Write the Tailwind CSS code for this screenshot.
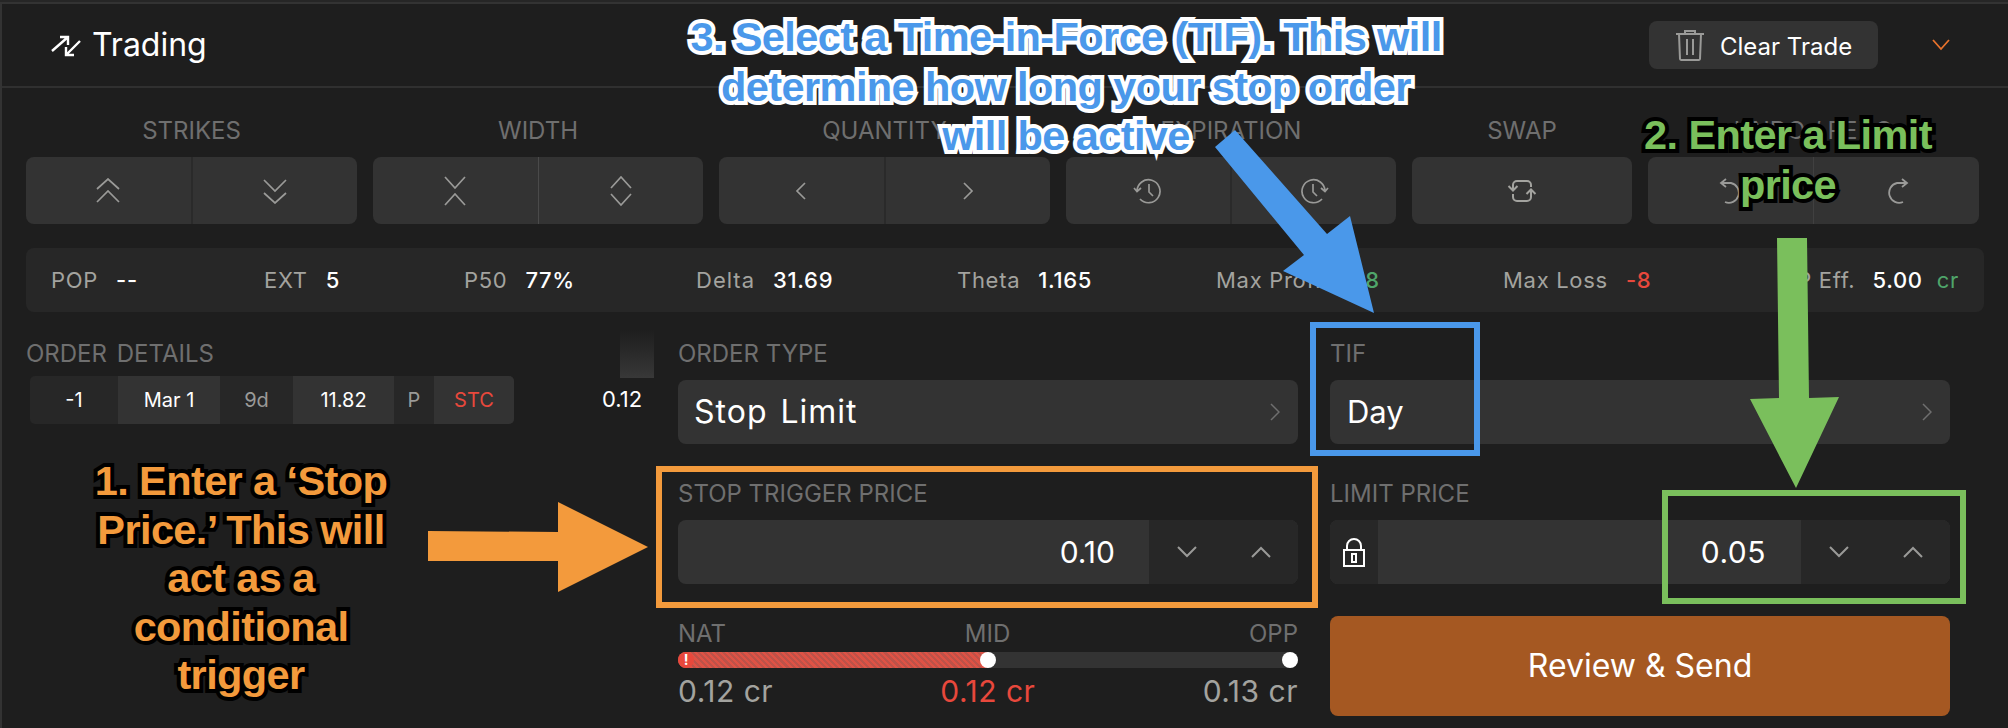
<!doctype html>
<html><head><meta charset="utf-8"><script src="https://cdn.jsdelivr.net/npm/@tailwindcss/browser@4"></script></head>
<body class="bg-[#1e1e1e] m-0">
<div class="relative w-[2008px] h-[728px] overflow-hidden bg-[#262626] pt-[2px] font-['Inter',sans-serif] text-white">
 <div class="h-[726px] border-t-2 border-l-2 border-[#333333] bg-[#1e1e1e]">
  <header class="h-[84px] border-b-2 border-[#303030] flex items-center pl-[48px] pr-[58px]">
    <svg class="w-[32px] h-[24px] mr-[10px]" viewBox="0 0 32 24" fill="none" stroke="#fff" stroke-width="2.400"><path d="M2 18 18 4M10 4h8v8M30 8 16 22M16 14v8h8"/></svg>
    <span class="text-[32px]">Trading</span>
    <button class="ml-auto w-[229px] h-[48px] rounded-[8px] bg-[#333333] flex items-center pl-[26px] text-[24px]">
      <svg class="w-[30px] h-[32px] mr-[15px]" viewBox="0 0 30 32" fill="none" stroke="#9a9a98" stroke-width="2"><path d="M1 5h28M10 5V2h10v3M4 5l1 25a1.500 1.500 0 0 0 1.500 1h17a1.500 1.500 0 0 0 1.500-1l1-25M12 10v16M18 10v16"/></svg>
      <span class="pt-[3px]">Clear Trade</span></button>
    <svg class="w-[18px] h-[12px] ml-[54px]" viewBox="0 0 18 12" fill="none" stroke="#e8722c" stroke-width="1.800"><path d="M1 1l8 9 8-9"/></svg>
  </header>
  <div class="px-[24px]">
   <div class="flex gap-[16px] pt-[29px]">
    <div class="w-[331px]"><p class="text-center text-[24px] text-[#6f6f6f] leading-[28px] mb-[12px]">STRIKES</p>
     <div class="flex h-[67px] rounded-[8px] bg-[#333333] overflow-hidden"><div class="flex-1 flex items-center justify-center border-r-2 border-[#2a2a2a]"><svg class="w-[26px] h-[26px]" viewBox="0 0 26 26" fill="none" stroke="#9a9a98" stroke-width="1.700"><path d="M2 11 13 1l11 10M2 24l11-11 11 11"/></svg></div><div class="flex-1 flex items-center justify-center"><svg class="w-[26px] h-[26px]" viewBox="0 0 26 26" fill="none" stroke="#9a9a98" stroke-width="1.700"><path d="M2 2l11 11L24 2M2 15l11 10 11-10"/></svg></div></div></div>
    <div class="w-[330px]"><p class="text-center text-[24px] text-[#6f6f6f] leading-[28px] mb-[12px]">WIDTH</p>
     <div class="flex h-[67px] rounded-[8px] bg-[#333333] overflow-hidden"><div class="flex-1 flex items-center justify-center border-r border-[#4a4a4a]"><svg class="w-[24px] h-[32px]" viewBox="0 0 24 32" fill="none" stroke="#9a9a98" stroke-width="1.700"><path d="M2 2l10 11L22 2M2 30l10-11 10 11"/></svg></div><div class="flex-1 flex items-center justify-center"><svg class="w-[24px] h-[32px]" viewBox="0 0 24 32" fill="none" stroke="#9a9a98" stroke-width="1.700"><path d="M2 13 12 2l10 11M2 19l10 11 10-11"/></svg></div></div></div>
    <div class="w-[331px]"><p class="text-center text-[24px] text-[#6f6f6f] leading-[28px] mb-[12px]">QUANTITY</p>
     <div class="flex h-[67px] rounded-[8px] bg-[#333333] overflow-hidden"><div class="flex-1 flex items-center justify-center border-r-2 border-[#2a2a2a]"><svg class="w-[12px] h-[20px]" viewBox="0 0 12 20" fill="none" stroke="#9a9a98" stroke-width="1.700"><path d="M10 2 2 10l8 8"/></svg></div><div class="flex-1 flex items-center justify-center"><svg class="w-[12px] h-[20px]" viewBox="0 0 12 20" fill="none" stroke="#9a9a98" stroke-width="1.700"><path d="M2 2l8 8-8 8"/></svg></div></div></div>
    <div class="w-[330px]"><p class="text-center text-[24px] text-[#6f6f6f] leading-[28px] mb-[12px]">EXPIRATION</p>
     <div class="flex h-[67px] rounded-[8px] bg-[#333333] overflow-hidden"><div class="flex-1 flex items-center justify-center border-r-2 border-[#2a2a2a]"><svg class="w-[30px] h-[26px]" viewBox="0 0 30 26" fill="none" stroke="#9a9a98" stroke-width="1.700"><path d="M4 13a11.500 11.500 0 1 1 3 8M1 10l3 3.500L8 10M16 6v8l4 4"/></svg></div><div class="flex-1 flex items-center justify-center"><svg class="w-[30px] h-[26px]" viewBox="0 0 30 26" fill="none" stroke="#9a9a98" stroke-width="1.700"><path d="M26 13a11.500 11.500 0 1 0-3 8M29 10l-3 3.500L22 10M14 6v8l4 4"/></svg></div></div></div>
    <div class="w-[220px]"><p class="text-center text-[24px] text-[#6f6f6f] leading-[28px] mb-[12px]">SWAP</p>
     <div class="flex h-[67px] rounded-[8px] bg-[#333333] items-center justify-center"><svg class="w-[30px] h-[24px]" viewBox="0 0 30 24" fill="none" stroke="#a3a39f" stroke-width="2"><path d="M6 11V6a4 4 0 0 1 4-4h10a4 4 0 0 1 4 4v2M1.500 7 6 11.500 10.500 7M6 15v3a4 4 0 0 0 4 4h10a4 4 0 0 0 4-4v-7M19.500 15 24 10.500 28.500 15"/></svg></div></div>
    <div class="w-[331px]"><p class="text-center text-[24px] text-[#6f6f6f] leading-[28px] mb-[12px]">UNDO / REDO</p>
     <div class="flex h-[67px] rounded-[8px] bg-[#333333] overflow-hidden"><div class="flex-1 flex items-center justify-center border-r border-[#404040]"><svg class="w-[24px] h-[26px]" viewBox="0 0 24 26" fill="none" stroke="#9a9a98" stroke-width="1.800"><path d="M3 5h9a10 10 0 1 1-6 19M7 1 2 5l5 4"/></svg></div><div class="flex-1 flex items-center justify-center"><svg class="w-[24px] h-[26px]" viewBox="0 0 24 26" fill="none" stroke="#9a9a98" stroke-width="1.800"><path d="M21 5h-9a10 10 0 1 0 6 19M17 1l5 4-5 4"/></svg></div></div></div>
   </div>
   <div class="mt-[24px] h-[64px] rounded-[8px] bg-[#272727] flex items-center px-[25px] text-[22px] tracking-[0.7px] text-[#a3a39f]">
     <span class="w-[213px]">POP<b class="ml-[18px] font-medium text-white">--</b></span>
     <span class="w-[200px]">EXT<b class="ml-[18px] font-medium text-white">5</b></span>
     <span class="w-[232px]">P50<b class="ml-[18px] font-medium text-white">77%</b></span>
     <span class="w-[261px] tracking-[1px]">Delta<b class="ml-[18px] font-medium text-white tracking-[0.7px]">31.69</b></span>
     <span class="w-[259px]">Theta<b class="ml-[18px] font-medium text-white">1.165</b></span>
     <span class="w-[287px]">Max Profit<b class="ml-[36px] font-medium text-[#4fa56a]">8</b></span>
     <span class="w-[276px]">Max Loss<b class="ml-[18px] font-medium text-[#e8483c]">-8</b></span>
     <span class="flex-1 text-right">BP Eff.<b class="ml-[17px] font-medium text-white">5.00</b><b class="ml-[14px] font-normal text-[#4fa56a]">cr</b></span>
   </div>
   <div class="flex mt-[28px]">
     <div class="w-[652px] flex shrink-0">
       <div class="w-[594px] shrink-0">
         <p class="text-[24px] text-[#6f6f6f] leading-[28px] [word-spacing:3px]">ORDER DETAILS</p>
         <div class="ml-[4px] mt-[8px] w-[484px] h-[48px] rounded-[5px] overflow-hidden flex text-[20px] bg-[#272727]">
           <span class="w-[88px] flex items-center justify-center">-1</span>
           <span class="w-[102px] flex items-center justify-center bg-[#333333]">Mar 1</span>
           <span class="w-[73px] flex items-center justify-center text-[#9a9a98]">9d</span>
           <span class="w-[101px] flex items-center justify-center bg-[#333333]">11.82</span>
           <span class="w-[40px] flex items-center justify-center text-[#9a9a98]">P</span>
           <span class="w-[80px] flex items-center justify-center bg-[#333333] text-[#e8483c]">STC</span>
         </div>
       </div>
       <div class="w-[58px] flex flex-col -mt-[10px]">
         <div class="w-[34px] h-[48px] bg-gradient-to-b from-[#1e1e1e] to-[#383838]"></div>
         <span class="text-[22px] -ml-[18px] mt-[9px] leading-[24px]">0.12</span>
       </div>
     </div>
     <div class="w-[620px]">
       <p class="text-[24px] text-[#6f6f6f] leading-[28px]">ORDER TYPE</p>
       <div class="mt-[12px] h-[64px] rounded-[8px] bg-[#333333] flex items-center justify-between pl-[16px] pr-[18px] text-[32px] tracking-[1px] [word-spacing:3px]">Stop Limit<svg class="w-[10px] h-[20px]" viewBox="0 0 10 20" fill="none" stroke="#6f6f6f" stroke-width="1.500"><path d="M1 2l8 8-8 8"/></svg></div>
       <p class="mt-[36px] text-[24px] text-[#6f6f6f] leading-[28px]">STOP TRIGGER PRICE</p>
       <div class="mt-[12px] h-[64px] rounded-[8px] bg-[#333333] overflow-hidden flex text-[30px]">
         <div class="w-[471px] flex items-center justify-end pr-[34px]">0.10</div>
         <div class="w-[75px] bg-[#272727] flex items-center justify-center"><svg class="w-[20px] h-[12px]" viewBox="0 0 20 12" fill="none" stroke="#9a9a98" stroke-width="2"><path d="M1 1l9 9 9-9"/></svg></div>
         <div class="w-[74px] bg-[#272727] flex items-center justify-center"><svg class="w-[20px] h-[12px]" viewBox="0 0 20 12" fill="none" stroke="#9a9a98" stroke-width="2"><path d="M1 11l9-9 9 9"/></svg></div>
       </div>
       <div class="mt-[36px] flex justify-between text-[24px] text-[#6f6f6f] leading-[28px]"><span>NAT</span><span>MID</span><span>OPP</span></div>
       <div class="relative mt-[4px] h-[16px] rounded-full bg-[#333333]">
         <div class="absolute left-0 top-0 h-[16px] w-[310px] rounded-l-full bg-[repeating-linear-gradient(45deg,#df5245,#df5245_2.200px,#bd5249_2.200px,#bd5249_4.400px)]"></div>
         <div class="absolute left-0 top-0 w-[16px] h-[16px] rounded-full bg-[#e8483c] text-[14px] font-bold leading-[16px] text-center">!</div>
         <div class="absolute left-[302px] top-0 w-[16px] h-[16px] rounded-full bg-white"></div>
         <div class="absolute right-0 top-0 w-[16px] h-[16px] rounded-full bg-white"></div>
       </div>
       <div class="mt-[6px] flex justify-between text-[30px] tracking-[0.5px] text-[#a3a39f] leading-[34px]"><span>0.12 cr</span><span class="text-[#e8483c]">0.12 cr</span><span>0.13 cr</span></div>
     </div>
     <div class="w-[620px] ml-[32px]">
       <p class="text-[24px] text-[#6f6f6f] leading-[28px]">TIF</p>
       <div class="mt-[12px] h-[64px] rounded-[8px] bg-[#333333] flex items-center justify-between pl-[17px] pr-[18px] text-[31px]">Day<svg class="w-[10px] h-[20px]" viewBox="0 0 10 20" fill="none" stroke="#6f6f6f" stroke-width="1.500"><path d="M1 2l8 8-8 8"/></svg></div>
       <p class="mt-[36px] text-[24px] text-[#6f6f6f] leading-[28px]">LIMIT PRICE</p>
       <div class="mt-[12px] h-[64px] rounded-[8px] bg-[#333333] overflow-hidden flex text-[30px]">
         <div class="w-[48px] bg-[#272727] flex items-center justify-center"><svg class="w-[26px] h-[30px]" viewBox="0 0 26 30" fill="none" stroke="#fff" stroke-width="2"><path d="M3 13h20v16H3zM6 13V9a7 7 0 0 1 14 0v4M11 17h4v8h-4z"/></svg></div>
         <div class="w-[423px] flex items-center justify-end pr-[35px] tracking-[0.5px]">0.05</div>
         <div class="w-[75px] bg-[#272727] flex items-center justify-center"><svg class="w-[20px] h-[12px]" viewBox="0 0 20 12" fill="none" stroke="#9a9a98" stroke-width="2"><path d="M1 1l9 9 9-9"/></svg></div>
         <div class="w-[74px] bg-[#272727] flex items-center justify-center"><svg class="w-[20px] h-[12px]" viewBox="0 0 20 12" fill="none" stroke="#9a9a98" stroke-width="2"><path d="M1 11l9-9 9 9"/></svg></div>
       </div>
       <button class="mt-[32px] w-full h-[100px] rounded-[8px] bg-[#a55822] text-[32px]">Review &amp; Send</button>
     </div>
   </div>
  </div>
 </div>
 <!-- annotation overlays -->
 <svg class="absolute inset-0 w-[2008px] h-[728px]" viewBox="0 0 2008 728">
   <polygon points="428,531 558,532 558,502 648,547 558,592 558,561 428,561" fill="#f39a3c"/>
   <polygon points="1235,130 1327,234 1350,216 1374,313 1283,271 1304,255 1215,147" fill="#4a98ea"/>
   <polygon points="1777,238 1807,238 1809,398 1839,397 1796,488 1750,399 1779,398" fill="#7abf5c"/>
 </svg>
 <div class="absolute left-[656px] top-[466px] w-[662px] h-[142px] border-[6px] border-[#f39a3c]"></div>
 <div class="absolute left-[1310px] top-[322px] w-[170px] h-[134px] border-[6px] border-[#4a98ea]"></div>
 <div class="absolute left-[1662px] top-[490px] w-[304px] h-[114px] border-[6px] border-[#7abf5c]"></div>
 <p class="absolute left-[566px] top-[12px] w-[1000px] text-center font-['Liberation_Sans',sans-serif] font-bold text-[41.500px] leading-[49.500px] tracking-[-0.6px] text-[#4a98ea] [paint-order:stroke] [-webkit-text-stroke:8px_#fff]">3. Select a Time-in-Force (TIF). This will<br>determine how long your stop order<br>will be active</p>
 <p class="absolute left-[1588px] top-[110px] w-[400px] text-center font-['Liberation_Sans',sans-serif] font-bold text-[41.500px] leading-[50px] tracking-[-0.6px] text-[#7abf5c] [paint-order:stroke] [-webkit-text-stroke:8px_#000]">2. Enter a Limit<br>price</p>
 <p class="absolute left-[41px] top-[457px] w-[400px] text-center font-['Liberation_Sans',sans-serif] font-bold text-[41.500px] leading-[48.500px] tracking-[-0.6px] text-[#f39a3c] [paint-order:stroke] [-webkit-text-stroke:8px_#000]">1. Enter a ‘Stop<br>Price.’ This will<br>act as a<br>conditional<br>trigger</p>
</div>
</body></html>
